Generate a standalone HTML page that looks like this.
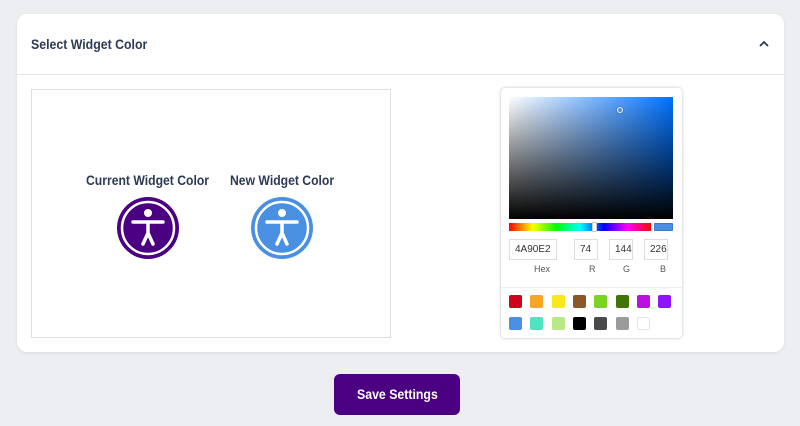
<!DOCTYPE html><html><head><style>
body{margin:0;width:800px;height:426px;background:#eceef2;font-family:"Liberation Sans",sans-serif;position:relative;overflow:hidden}
.card{position:absolute;left:17px;top:14px;width:767px;height:338px;background:#fff;border-radius:10px;box-shadow:0 1px 3px rgba(0,0,0,.08)}
.hdr{height:60px;border-bottom:1px solid #e3e5ea;position:relative}
.hdr span{position:absolute;left:14px;top:22px;font-size:14px;font-weight:bold;color:#2c3a56;transform:scaleX(.88);transform-origin:left}
.box{position:absolute;left:31px;top:89px;width:358px;height:247px;border:1px solid #dcdfe4;background:#fff}
.lbl{position:absolute;font-size:14px;font-weight:bold;color:#2c3a56;white-space:nowrap;transform:scaleX(.87);transform-origin:left}
.pk{position:absolute;left:501px;top:88px;width:181px;height:250px;background:#fff;border-radius:4px;box-shadow:0 0 3px rgba(0,0,0,.25)}
.grad{position:absolute;left:8px;top:9px;width:164px;height:122px;background:linear-gradient(to top,#000,transparent),linear-gradient(to right,#fff,#0071ff)}
.hue{position:absolute;left:8px;top:135px;width:142px;height:8px;background:linear-gradient(to right,red,#ff0,#0f0,#0ff,#00f,#f0f,red)}
.inp{position:absolute;top:151px;height:21px;border:1px solid #ddd;font-size:10px;line-height:20px;padding-left:5px;box-sizing:border-box;color:#333}
.t{position:absolute;top:176px;font-size:9px;color:#555}
.sw{position:absolute;width:13px;height:13px;border-radius:2px}
.btn{position:absolute;left:334px;top:374px;width:126px;height:41px;background:#4b0082;border-radius:6px;color:#fff;font-weight:bold;font-size:14px;line-height:41px}
.btn span{position:absolute;left:23px;transform:scaleX(.88);transform-origin:left;white-space:nowrap}
</style></head><body>
<div class="card"><div class="hdr"><span>Select Widget Color</span>
<svg style="position:absolute;left:742px;top:26px" width="10" height="8"><path d="M1 6L5 2L9 6" stroke="#2c3a56" stroke-width="1.8" fill="none"/></svg></div></div>
<div class="box"></div>
<div class="lbl" style="left:86px;top:172px">Current Widget Color</div>
<div class="lbl" style="left:230px;top:172px">New Widget Color</div>
<svg style="position:absolute;left:116px;top:196px" width="64" height="64" viewBox="0 0 64 64"><circle cx="32" cy="32" r="31" fill="#4b0082"/><circle cx="32" cy="32" r="26" fill="none" stroke="#fff" stroke-width="2.5"/><circle cx="32" cy="17" r="4" fill="#fff"/><path d="M17 26L47 26M32 26L32 37M32 37L27 48M32 37L37 48" stroke="#fff" stroke-width="3.5" stroke-linecap="round" fill="none"/></svg>
<svg style="position:absolute;left:250px;top:196px" width="64" height="64" viewBox="0 0 64 64"><circle cx="32" cy="32" r="31" fill="#4a90e2"/><circle cx="32" cy="32" r="26" fill="none" stroke="#fff" stroke-width="2.5"/><circle cx="32" cy="17" r="4" fill="#fff"/><path d="M17 26L47 26M32 26L32 37M32 37L27 48M32 37L37 48" stroke="#fff" stroke-width="3.5" stroke-linecap="round" fill="none"/></svg>
<div class="pk">
<div class="grad"></div>
<div style="position:absolute;left:116px;top:19px;width:4px;height:4px;border:1.5px solid #fff;border-radius:50%;box-shadow:0 0 1px #000"></div>
<div class="hue"></div>
<div style="position:absolute;left:91px;top:134px;width:3px;height:8px;background:#fff;border:1px solid #ccc"></div>
<div style="position:absolute;left:153px;top:135px;width:19px;height:8px;background:#4a90e2;border:1px solid #3a7ac8;box-sizing:border-box;border-radius:1px"></div>
<div class="inp" style="left:8px;width:48px">4A90E2</div>
<div class="inp" style="left:73px;width:24px">74</div>
<div class="inp" style="left:108px;width:24px">144</div>
<div class="inp" style="left:143px;width:24px">226</div>
<div class="t" style="left:33px">Hex</div><div class="t" style="left:88px">R</div><div class="t" style="left:122px">G</div><div class="t" style="left:159px">B</div>
<div style="position:absolute;left:0;right:0;top:199px;border-top:1px solid #eee"></div>
<div class="sw" style="left:8px;top:207px;background:#d0021b"></div>
<div class="sw" style="left:29px;top:207px;background:#f5a623"></div>
<div class="sw" style="left:51px;top:207px;background:#f8e71c"></div>
<div class="sw" style="left:72px;top:207px;background:#8b572a"></div>
<div class="sw" style="left:93px;top:207px;background:#7ed321"></div>
<div class="sw" style="left:115px;top:207px;background:#417505"></div>
<div class="sw" style="left:136px;top:207px;background:#bd10e0"></div>
<div class="sw" style="left:157px;top:207px;background:#9013fe"></div>
<div class="sw" style="left:8px;top:229px;background:#4a90e2"></div>
<div class="sw" style="left:29px;top:229px;background:#50e3c2"></div>
<div class="sw" style="left:51px;top:229px;background:#b8e986"></div>
<div class="sw" style="left:72px;top:229px;background:#000"></div>
<div class="sw" style="left:93px;top:229px;background:#4a4a4a"></div>
<div class="sw" style="left:115px;top:229px;background:#9b9b9b"></div>
<div class="sw" style="left:136px;top:229px;background:#fff;border:1px solid #e5e5e5;box-sizing:border-box"></div>
</div>
<div class="btn"><span>Save Settings</span></div>
</body></html>
